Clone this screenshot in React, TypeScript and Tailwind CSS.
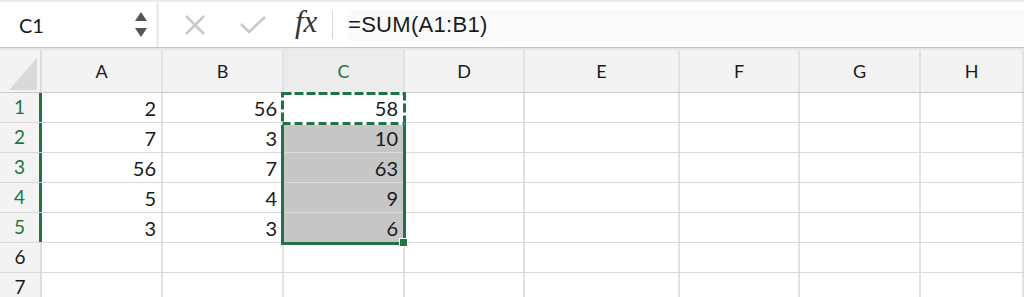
import React from "react";

const cols = [
  { k: "A", w: "w-[121px]" },
  { k: "B", w: "w-[121px]" },
  { k: "C", w: "w-[121px]" },
  { k: "D", w: "w-[120px]" },
  { k: "E", w: "w-[155px]" },
  { k: "F", w: "w-[120px]" },
  { k: "G", w: "w-[121px]" },
  { k: "H", w: "flex-1" },
];

const data: (string | number)[][] = [
  [2, 56, 58],
  [7, 3, 10],
  [56, 7, 63],
  [5, 4, 9],
  [3, 3, 6],
  [],
  [],
];

export default function App() {
  return (
    <div
      className="relative w-[1024px] h-[297px] overflow-hidden bg-white text-[#1a1a1a]"
      style={{ fontFamily: "Lato, 'Open Sans', sans-serif" }}
    >
      {/* Toolbar */}
      <div className="flex h-[47px] bg-[#ededed] pt-[2px] gap-[3px]">
        <div className="w-[156px] bg-white flex items-center justify-between pl-[19px] pr-[9px]">
          <span className="text-[20px] leading-none">C1</span>
          <div className="flex flex-col gap-[7px] items-center">
            <svg width="12" height="9" viewBox="0 0 12 9">
              <path d="M6 0 L12 9 L0 9 Z" fill="#555" />
            </svg>
            <svg width="12" height="9" viewBox="0 0 12 9">
              <path d="M0 0 L12 0 L6 9 Z" fill="#555" />
            </svg>
          </div>
        </div>
        <div className="flex-1 bg-white flex items-center">
          <div className="w-[173px] flex items-center h-full">
            <svg width="22" height="22" viewBox="0 0 22 22" className="ml-[25px]">
              <path d="M2 2 L20 20 M20 2 L2 20" stroke="#c9c9c9" strokeWidth="2.6" />
            </svg>
            <svg width="26" height="20" viewBox="0 0 26 20" className="ml-[34px]">
              <path d="M1 9 L9 17 L25 2" stroke="#c9c9c9" strokeWidth="2.6" fill="none" />
            </svg>
            <span
              className="ml-[29px] text-[31px] italic leading-none text-[#333] -mt-[6px]"
              style={{ fontFamily: "'Liberation Serif', 'DejaVu Serif', serif" }}
            >
              fx
            </span>
          </div>
          <div className="w-px h-[28px] bg-[#d6d6d6]" />
          <div className="flex-1 h-[32px] ml-[15px] bg-[#fafafa] flex items-center">
            <span
              className="text-[22px] leading-none tracking-[0.3px]"
              style={{ fontFamily: "'Liberation Sans', Arial, sans-serif" }}
            >
              =SUM(A1:B1)
            </span>
          </div>
        </div>
      </div>
      <div className="h-px bg-[#c4c4c4]" />
      <div className="h-[2px] bg-[#e6e6e6]" />

      {/* Column headers */}
      <div className="flex h-[43px] bg-[#f3f3f3] border-b border-[#c9c9c9]">
        <div className="w-[42px] shrink-0 border-r-2 border-[#dcdcdc] relative">
          <svg width="30" height="32" viewBox="0 0 30 32" className="absolute left-[9px] bottom-[2px]">
            <path d="M28 0 L28 32 L0 32 Z" fill="#d9d9d9" />
          </svg>
        </div>
        {cols.map((c) => (
          <div
            key={c.k}
            className={`${c.w} shrink-0 flex items-center justify-center border-r-2 border-[#e2e2e2] text-[18px] ${
              c.k === "C" ? "text-[#217346] bg-[#ececec]" : "text-[#1a1a1a]"
            }`}
          >
            {c.k}
          </div>
        ))}
      </div>

      {/* Rows */}
      {data.map((row, i) => {
        const sel = i < 5;
        return (
          <div key={i} className="flex h-[30px] border-b border-[#d9d9d9]">
            <div
              className={`w-[42px] shrink-0 flex items-center justify-center bg-[#f3f3f3] text-[19px] ${
                sel ? "text-[#217346] border-r-[3px] border-[#217346]" : "text-[#1a1a1a] border-r-2 border-[#dcdcdc]"
              }`}
            >
              {i + 1}
            </div>
            {cols.map((c, j) => (
              <div
                key={c.k}
                className={`${c.w} shrink-0 flex items-center justify-end pr-[5px] border-r-2 border-[#e2e2e2] text-[20px] ${
                  j === 2 && i >= 1 && i <= 4 ? "bg-[#c6c6c6]" : ""
                }`}
              >
                {row[j] ?? ""}
              </div>
            ))}
          </div>
        );
      })}

      {/* Selection outline */}
      <div className="absolute left-[281px] top-[92px] w-[125px] h-[153px] border-[3px] border-[#217346] pointer-events-none" />
      {/* Marching ants around C1 */}
      <svg
        className="absolute left-[281px] top-[92px] pointer-events-none"
        width="125"
        height="33"
        viewBox="0 0 125 33"
      >
        <rect
          x="1.5"
          y="1.5"
          width="122"
          height="30"
          fill="none"
          stroke="#ffffff"
          strokeWidth="3"
          strokeDasharray="3 9"
          strokeDashoffset="-9"
        />
        <path d="M1.5 31.5 H123.5" stroke="#ffffff" strokeWidth="3" />
        <path d="M1.5 31.5 H123.5" stroke="#217346" strokeWidth="3" strokeDasharray="8 4" />
      </svg>
      {/* Fill handle */}
      <div className="absolute left-[399px] top-[238px] w-[9px] h-[9px] bg-[#217346] border border-white" />
    </div>
  );
}
